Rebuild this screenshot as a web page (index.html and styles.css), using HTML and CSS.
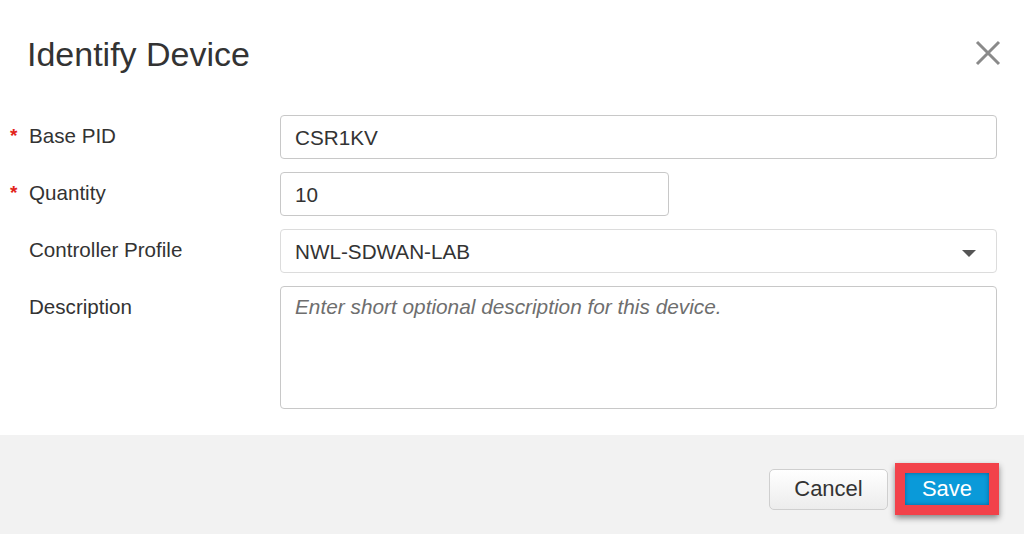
FILE: index.html
```html
<!DOCTYPE html>
<html lang="en">
<head>
<meta charset="utf-8">
<title>Identify Device</title>
<link rel="stylesheet" href="styles.css">
</head>
<body>
<div class="modal">
  <div class="header">
    <h1 class="title">Identify Device</h1>
    <button class="close" aria-label="Close">
      <svg width="26" height="26" viewBox="0 0 26 26"><path d="M2 2 L24 24 M24 2 L2 24" stroke="#8a8a8a" stroke-width="3" fill="none"/></svg>
    </button>
  </div>
  <div class="form">
    <div class="row">
      <div class="label"><span class="req">*</span>Base PID</div>
      <div class="field"><div class="input">CSR1KV</div></div>
    </div>
    <div class="row">
      <div class="label"><span class="req">*</span>Quantity</div>
      <div class="field"><div class="input short">10</div></div>
    </div>
    <div class="row">
      <div class="label"><span class="req none"></span>Controller Profile</div>
      <div class="field"><div class="input select">NWL-SDWAN-LAB<span class="caret"></span></div></div>
    </div>
    <div class="row">
      <div class="label"><span class="req none"></span>Description</div>
      <div class="field"><div class="textarea">Enter short optional description for this device.</div></div>
    </div>
  </div>
  <div class="footer">
    <button class="btn cancel">Cancel</button>
    <div class="highlight"><button class="btn save">Save</button></div>
  </div>
</div>
</body>
</html>
```

FILE: styles.css
```css
html, body {
  margin: 0;
  padding: 0;
  background: #ffffff;
}
body {
  font-family: "Liberation Sans", Arial, sans-serif;
  color: #333333;
  width: 1024px;
  height: 534px;
  overflow: hidden;
}
.modal {
  display: flex;
  flex-direction: column;
  height: 534px;
}
.header {
  display: flex;
  justify-content: space-between;
  align-items: flex-start;
  padding: 34px 23px 0 27px;
  height: 83px;
  box-sizing: border-box;
}
.title {
  margin: 0;
  font-size: 34px;
  font-weight: normal;
  line-height: 40px;
  color: #333333;
}
.close {
  border: 0;
  background: none;
  padding: 0;
  margin-top: 6px;
  width: 26px;
  height: 26px;
  display: flex;
}
.form {
  display: flex;
  flex-direction: column;
  gap: 13px;
  padding: 32px 27px 0 10px;
  height: 352px;
  box-sizing: border-box;
}
.row {
  display: grid;
  grid-template-columns: 270px 1fr;
  align-items: start;
}
.label {
  display: flex;
  font-size: 20.6px;
  line-height: 42px;
  color: #333333;
}
.req {
  width: 19px;
  color: #e2231a;
  font-weight: bold;
  font-size: 19px;
}
.field {
  display: flex;
}
.input {
  position: relative;
  flex: 1;
  height: 44px;
  box-sizing: border-box;
  border: 1px solid #c8c8c8;
  border-radius: 4px;
  padding: 0 13px 0 14px;
  font-size: 20.7px;
  line-height: 43px;
  color: #333333;
  background: #fff;
}
.input.short {
  flex: 0 0 389px;
}
.input.select {
  border-color: #dcdcdc;
}
.caret {
  position: absolute;
  right: 20px;
  top: 20px;
  width: 0;
  height: 0;
  border-left: 7px solid transparent;
  border-right: 7px solid transparent;
  border-top: 7px solid #555555;
}
.textarea {
  flex: 1;
  height: 123px;
  box-sizing: border-box;
  border: 1px solid #c8c8c8;
  border-radius: 4px;
  padding: 8px 13px 0 14px;
  font-size: 20.8px;
  line-height: 24px;
  font-style: italic;
  color: #6e6e6e;
}
.footer {
  flex: 1;
  background: #f2f2f2;
  display: flex;
  justify-content: flex-end;
  align-items: center;
  gap: 7px;
  padding: 9px 25px 0 0;
}
.btn {
  font-family: "Liberation Sans", Arial, sans-serif;
  font-size: 22px;
  cursor: pointer;
}
.cancel {
  width: 119px;
  height: 41px;
  border: 1px solid #cfcfcf;
  border-radius: 5px;
  background: linear-gradient(#ffffff, #ececec);
  color: #333333;
  padding: 0;
}
.highlight {
  border: 10px solid #f2424a;
  box-shadow: 0 3px 6px rgba(0, 0, 0, 0.45);
  display: flex;
}
.save {
  width: 84px;
  height: 32px;
  border: 0;
  padding: 0;
  color: #ffffff;
  background: #0a9ad9;
  box-shadow: inset 0 0 4px rgba(0, 60, 110, 0.6);
}
```
